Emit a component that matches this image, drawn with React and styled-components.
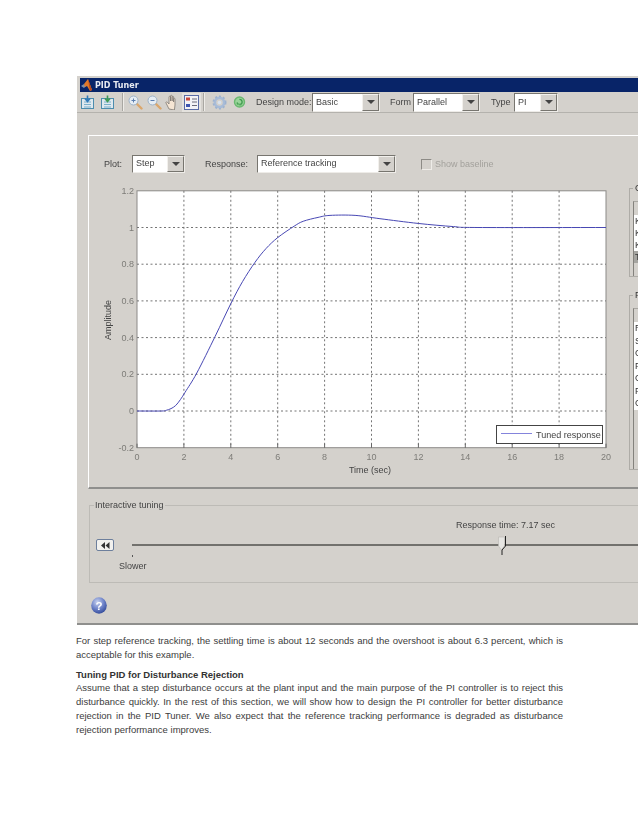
import styled, { createGlobalStyle } from "styled-components";

const GlobalStyle = createGlobalStyle`
  html, body { margin: 0; padding: 0; background: #fff; }
`;

const uiFont = `"Liberation Sans", Arial, sans-serif`;

const Page = styled.div`
  width: 638px;
  height: 826px;
  overflow: hidden;
  padding-top: 76px;
  box-sizing: border-box;
  background: #fff;
`;

const Window = styled.div`
  width: 561px;
  height: 549px;
  margin-left: 77px;
  box-sizing: border-box;
  padding-top: 2px;
  overflow: hidden;
  background: #d4d1cc;
  border-bottom: 2px solid #8f8f8d;
  font-family: ${uiFont};
  font-size: 9px;
  color: #333;
  filter: blur(0.45px);
`;

const TitleBar = styled.div`
  height: 14px;
  margin-left: 3px;
  display: flex;
  align-items: center;
  gap: 2px;
  padding-left: 1px;
  background: #082468;
  color: #e8ebf2;
  font-family: "DejaVu Sans", sans-serif;
  font-weight: bold;
  font-size: 8px;
`;

const Toolbar = styled.div`
  height: 21px;
  display: flex;
  align-items: center;
  box-sizing: border-box;
  border-bottom: 1px solid #b4b2ad;
`;

const IconSlot = styled.div`
  flex: none;
  width: ${(p) => p.$w || 20}px;
  height: 19px;
  display: flex;
  align-items: center;
  justify-content: center;
  background: ${(p) => (p.$on ? "#e4e2de" : "transparent")};
`;

const Separator = styled.div`
  flex: none;
  width: 1px;
  height: 18px;
  margin: 0 ${(p) => p.$after}px 0 ${(p) => p.$before}px;
  background: #a9a7a2;
  border-right: 1px solid #eeece8;
`;

const ToolLabel = styled.span`
  flex: none;
  width: ${(p) => p.$w}px;
  margin-left: ${(p) => p.$ml}px;
  color: #444;
  white-space: nowrap;
`;

const SelectBox = styled.div`
  flex: none;
  width: ${(p) => p.$w}px;
  height: ${(p) => p.$h || 19}px;
  box-sizing: border-box;
  display: flex;
  background: #fff;
  border-top: 1px solid #77756f;
  border-left: 1px solid #77756f;
  border-right: 1px solid #eeece8;
  border-bottom: 1px solid #eeece8;
`;

const SelectValue = styled.span`
  flex: 1;
  padding-left: 3px;
  line-height: ${(p) => (p.$h || 19) - 3}px;
  color: #444;
  white-space: nowrap;
`;

const SelectArrow = styled.span`
  flex: none;
  width: 15px;
  display: flex;
  align-items: center;
  justify-content: center;
  background: #d4d1cc;
  border-top: 1px solid #f2f0ec;
  border-left: 1px solid #f2f0ec;
  border-right: 1px solid #77756f;
  border-bottom: 1px solid #77756f;
  &::after {
    content: "";
    border-left: 4px solid transparent;
    border-right: 4px solid transparent;
    border-top: 4px solid #444;
  }
`;

const Panel = styled.div`
  height: 354px;
  margin: 22px 0 0 11px;
  padding: 19px 0 0 11px;
  box-sizing: border-box;
  border-top: 1px solid #fff;
  border-left: 1px solid #fff;
  border-bottom: 2px solid #8f8f8d;
`;

const ControlRow = styled.div`
  display: flex;
  align-items: center;
  height: 18px;
  margin-left: 4px;
`;

const CheckBox = styled.span`
  flex: none;
  width: 9px;
  height: 9px;
  margin-left: 25px;
  margin-right: 3px;
  border-top: 1px solid #8d8b86;
  border-left: 1px solid #8d8b86;
  border-right: 1px solid #eeece8;
  border-bottom: 1px solid #eeece8;
`;

const MutedLabel = styled.span`
  color: #a3a19c;
`;

const PlotRow = styled.div`
  display: flex;
  align-items: flex-start;
  margin-top: 12px;
`;

const Chart = styled.svg`
  flex: none;
  display: block;
`;

const SideColumn = styled.div`
  flex: none;
  width: 60px;
  margin: 3px 0 0 13px;
  display: flex;
  flex-direction: column;
  gap: 18px;
`;

const SideGroup = styled.div`
  height: ${(p) => p.$h}px;
  box-sizing: border-box;
  padding: ${(p) => p.$top}px 0 0 3px;
  border: 1px solid #aeaca7;
  border-right: 0;
  position: relative;
`;

const SideTitle = styled.span`
  position: absolute;
  top: -6px;
  left: 3px;
  padding: 0 2px;
  background: #d4d1cc;
  line-height: 11px;
`;

const SideTable = styled.div`
  height: 100%;
  padding-top: 13px;
  box-sizing: border-box;
  border-left: 1px solid #84827d;
  border-top: 1px solid #a9a7a2;
`;

const SideCell = styled.div`
  height: ${(p) => p.$rh}px;
  line-height: ${(p) => p.$rh}px;
  padding-left: 1px;
  background: ${(p) => (p.$on ? "#a5a4a0" : "#fff")};
`;

const TuningGroup = styled.fieldset`
  height: 83px;
  margin: 11px 0 0 12px;
  padding: 0;
  box-sizing: border-box;
  border: 1px solid #bdbbb6;
  border-right: 0;
  min-width: 0;
`;

const TuningLegend = styled.legend`
  margin-left: 4px;
  padding: 0 1px;
  line-height: 11px;
  color: #444;
`;

const ResponseTime = styled.div`
  margin: 8px 0 0 366px;
  line-height: 12px;
  color: #444;
`;

const SliderRow = styled.div`
  display: flex;
  align-items: center;
  margin-top: 5px;
  height: 18px;
  padding-left: 6px;
`;

const RewindButton = styled.div`
  flex: none;
  width: 18px;
  height: 12px;
  box-sizing: border-box;
  display: flex;
  align-items: center;
  justify-content: center;
  background: #f2f1ee;
  border: 1px solid #6d7f9c;
  border-radius: 2px;
`;

const Track = styled.div`
  flex: 1;
  height: 2px;
  margin-left: 18px;
  background: #72716d;
  position: relative;
`;

const Thumb = styled.svg`
  position: absolute;
  left: 366px;
  top: -8px;
`;

const SlowerTick = styled.div`
  width: 1px;
  height: 2px;
  margin: 1px 0 0 42px;
  background: #555;
`;

const SlowerLabel = styled.div`
  margin: 3px 0 0 29px;
  line-height: 12px;
  color: #444;
`;

const HelpRow = styled.div`
  margin: 14px 0 0 14px;
`;

const Article = styled.div`
  width: 487px;
  margin: 9px 0 0 76px;
  font-family: "Liberation Sans", Arial, sans-serif;
  font-size: 9.5px;
  line-height: 14px;
  color: #3c3c3c;
`;

const Paragraph = styled.div`
  margin: 0 0 ${(p) => p.$mb || 0}px;
`;

const TextLine = styled.div`
  white-space: nowrap;
  text-align: justify;
  text-align-last: ${(p) => (p.$last ? "left" : "justify")};
`;

const Heading = styled.h3`
  margin: 0;
  font-size: 9.5px;
  line-height: 12px;
  font-weight: bold;
  color: #333;
`;

function Select({ value, w, h }) {
  return (
    <SelectBox $w={w} $h={h}>
      <SelectValue $h={h}>{value}</SelectValue>
      <SelectArrow />
    </SelectBox>
  );
}

function MatlabLogo() {
  return (
    <svg width="12" height="13" viewBox="0 0 12 13">
      <path d="M0 7l3-2 2 2-2 2z" fill="#7f8fa8" />
      <path d="M3 5l4-5 4 11-2 1-3-5-2 1z" fill="#e0792a" />
      <path d="M7 0l4 11-2 1z" fill="#b8481c" />
    </svg>
  );
}

function DocIcon({ arrow }) {
  return (
    <svg width="15" height="15" viewBox="0 0 15 15">
      <rect x="1.5" y="3.5" width="12" height="10" fill="#dfe8ee" stroke="#4d8dae" />
      <path d="M4 7h7M4 9.5h7M4 12h7" stroke="#7ab0cc" />
      <path d="M7.5 0.5v6M5 3.5l2.5 3 2.5-3" fill="none" stroke={arrow} strokeWidth="1.6" />
    </svg>
  );
}

function ZoomIcon({ plus }) {
  return (
    <svg width="16" height="16" viewBox="0 0 16 16">
      <path d="M9.5 9.5l5 5" stroke="#dba76c" strokeWidth="2.4" strokeLinecap="round" />
      <circle cx="6.5" cy="6.5" r="4.5" fill="#e6edf4" stroke="#9db2c8" />
      <path d="M4.5 6.5h4" stroke="#5c7fb0" />
      {plus && <path d="M6.5 4.5v4" stroke="#5c7fb0" />}
    </svg>
  );
}

function HandIcon() {
  return (
    <svg width="15" height="16" viewBox="0 0 15 16">
      <path
        d="M4 15l-3-6c-.5-1 .8-1.6 1.4-.8L4 10V3c0-1 1.4-1 1.5 0v4-5c0-1 1.5-1 1.6 0v5-4c0-1 1.5-1 1.5 0v5-3c0-1 1.4-1 1.4 0v6l-.6 5z"
        fill="#f6e6d4"
        stroke="#7f7a74"
        strokeWidth=".8"
      />
    </svg>
  );
}

function ListIcon() {
  return (
    <svg width="15" height="15" viewBox="0 0 15 15">
      <rect x=".5" y=".5" width="14" height="14" fill="#f3f3f6" stroke="#5a6ca6" />
      <rect x="2" y="2.5" width="4" height="3" fill="#c8483c" />
      <rect x="2" y="9" width="4" height="3" fill="#3c54b0" />
      <path d="M8 4h5M8 7h5M8 10.5h5" stroke="#6b6b7a" />
    </svg>
  );
}

function GearIcon() {
  return (
    <svg width="15" height="15" viewBox="0 0 15 15">
      <circle cx="7.5" cy="7.5" r="4.6" fill="none" stroke="#a8bcd8" strokeWidth="2.6" />
      <circle cx="7.5" cy="7.5" r="6.2" fill="none" stroke="#9db2d0" strokeWidth="1.6" strokeDasharray="2 2" />
      <circle cx="7.5" cy="7.5" r="1.8" fill="#d8e2ee" />
    </svg>
  );
}

function GreenIcon() {
  return (
    <svg width="13" height="14" viewBox="0 0 13 14">
      <circle cx="6.5" cy="7" r="5" fill="#9ad49a" stroke="#6ab870" strokeWidth="1.4" />
      <path d="M4 7.5a2.6 2.6 0 1 0 2.4-3.2" fill="none" stroke="#3e9a4e" strokeWidth="1.3" />
      <path d="M3.8 9l4.5 1.5" stroke="#6ab870" />
    </svg>
  );
}

function HelpIcon() {
  return (
    <svg width="16" height="17" viewBox="0 0 16 17" style={{ display: "block" }}>
      <defs>
        <radialGradient id="help" cx="40%" cy="30%" r="75%">
          <stop offset="0%" stopColor="#c9d3f0" />
          <stop offset="55%" stopColor="#6d82c8" />
          <stop offset="100%" stopColor="#2f4796" />
        </radialGradient>
      </defs>
      <ellipse cx="8" cy="8.5" rx="7.8" ry="8.2" fill="url(#help)" />
      <text x="8" y="12.5" textAnchor="middle" fill="#fff" fontSize="11.5" fontWeight="bold" fontFamily="Liberation Sans">
        ?
      </text>
    </svg>
  );
}

// plot area in chart coordinates
const px = (t) => 37 + t * 23.45;
const py = (v) => 226 - v * 183.5;

const curve = [
  [0, 0], [1.05, 0], [1.25, 0.004], [1.45, 0.013], [1.65, 0.03], [1.85, 0.062], [2.05, 0.102],
  [2.55, 0.207], [3.33, 0.406], [4, 0.585], [4.5, 0.705], [5.03, 0.81], [5.5, 0.885], [6, 0.945],
  [6.7, 1.007], [7.09, 1.034], [7.72, 1.055], [8.23, 1.066], [9.3, 1.066], [10.36, 1.048], [12, 1.022],
  [13.5, 1.005], [14.5, 1], [20, 1],
];

// catmull-rom through the points so the response doesn't look faceted
function smoothPath(points) {
  const p = points.map(([t, v]) => [px(t), py(v)]);
  let d = `M${p[0][0]} ${p[0][1]}`;
  for (let i = 0; i < p.length - 1; i++) {
    const a = p[i - 1] || p[i];
    const b = p[i];
    const c = p[i + 1];
    const e = p[i + 2] || c;
    const c1 = [b[0] + (c[0] - a[0]) / 6, b[1] + (c[1] - a[1]) / 6];
    const c2 = [c[0] - (e[0] - b[0]) / 6, c[1] - (e[1] - b[1]) / 6];
    d += `C${c1[0]} ${c1[1]} ${c2[0]} ${c2[1]} ${c[0]} ${c[1]}`;
  }
  return d;
}

const xTicks = [0, 2, 4, 6, 8, 10, 12, 14, 16, 18, 20];
const yTicks = [-0.2, 0, 0.2, 0.4, 0.6, 0.8, 1, 1.2];

function StepChart() {
  const left = px(0);
  const right = px(20);
  const top = py(1.2);
  const bottom = py(-0.2);
  return (
    <Chart width="516" height="295" viewBox="0 0 516 295" fontFamily="Liberation Sans, Arial, sans-serif" fontSize="9">
      <rect x={left} y={top} width={right - left} height={bottom - top} fill="#fff" stroke="#8b8a87" />
      {xTicks.slice(1, -1).map((t) => (
        <line key={t} x1={px(t)} x2={px(t)} y1={top} y2={bottom} stroke="#747474" strokeDasharray="2 2.5" />
      ))}
      {yTicks.slice(1, -1).map((v) => (
        <line key={v} x1={left} x2={right} y1={py(v)} y2={py(v)} stroke="#747474" strokeDasharray="2 2.5" />
      ))}
      {xTicks.map((t) => (
        <g key={t}>
          <line x1={px(t)} x2={px(t)} y1={bottom} y2={bottom - 4} stroke="#666" />
          <text x={px(t)} y={bottom + 12} textAnchor="middle" fill="#7d7c78">{t}</text>
        </g>
      ))}
      {yTicks.map((v) => (
        <text key={v} x={left - 3} y={py(v) + 3} textAnchor="end" fill="#7d7c78">{v}</text>
      ))}
      <path d={smoothPath(curve)} fill="none" stroke="#4848b4" strokeWidth="1" />
      <text x="270" y="288" textAnchor="middle" fill="#444">Time (sec)</text>
      <text transform="translate(11 135) rotate(-90)" textAnchor="middle" fill="#444">Amplitude</text>
      <rect x="396.5" y="240.5" width="106" height="18" fill="#fff" stroke="#444" />
      <line x1="401" x2="432" y1="248.5" y2="248.5" stroke="#8484dc" />
      <text x="436" y="252.5" fill="#444">Tuned response</text>
    </Chart>
  );
}

const controllerRows = ["K", "K", "K", "T"];
const performanceRows = ["R", "S", "C", "F", "C", "F", "C"];

export default function App() {
  return (
    <Page>
      <GlobalStyle />
      <Window>
        <TitleBar>
          <MatlabLogo />
          PID Tuner
        </TitleBar>
        <Toolbar>
          <IconSlot><DocIcon arrow="#2f79b8" /></IconSlot>
          <IconSlot><DocIcon arrow="#3f9a56" /></IconSlot>
          <Separator $before={5} $after={1} />
          <IconSlot $w={19}><ZoomIcon plus /></IconSlot>
          <IconSlot $w={19}><ZoomIcon /></IconSlot>
          <IconSlot $w={19}><HandIcon /></IconSlot>
          <IconSlot $w={19} $on><ListIcon /></IconSlot>
          <Separator $before={2} $after={4} />
          <IconSlot><GearIcon /></IconSlot>
          <IconSlot><GreenIcon /></IconSlot>
          <ToolLabel $ml={7} $w={56}>Design mode:</ToolLabel>
          <Select value="Basic" w={68} />
          <ToolLabel $ml={10} $w={23}>Form</ToolLabel>
          <Select value="Parallel" w={67} />
          <ToolLabel $ml={11} $w={23}>Type</ToolLabel>
          <Select value="PI" w={44} />
        </Toolbar>
        <Panel>
          <ControlRow>
            <ToolLabel $ml={0} $w={28}>Plot:</ToolLabel>
            <Select value="Step" w={53} h={18} />
            <ToolLabel $ml={20} $w={52}>Response:</ToolLabel>
            <Select value="Reference tracking" w={139} h={18} />
            <CheckBox />
            <MutedLabel>Show baseline</MutedLabel>
          </ControlRow>
          <PlotRow>
            <StepChart />
            <SideColumn>
              <SideGroup $h={89} $top={12}>
                <SideTitle>C</SideTitle>
                <SideTable>
                  {controllerRows.map((r, i) => (
                    <SideCell key={i} $rh={12} $on={i === 3}>{r}</SideCell>
                  ))}
                </SideTable>
              </SideGroup>
              <SideGroup $h={175} $top={12}>
                <SideTitle>P</SideTitle>
                <SideTable>
                  {performanceRows.map((r, i) => (
                    <SideCell key={i} $rh={12.5}>{r}</SideCell>
                  ))}
                </SideTable>
              </SideGroup>
            </SideColumn>
          </PlotRow>
        </Panel>
        <TuningGroup>
          <TuningLegend>Interactive tuning</TuningLegend>
          <ResponseTime>Response time: 7.17 sec</ResponseTime>
          <SliderRow>
            <RewindButton>
              <svg width="10" height="7" viewBox="0 0 10 7">
                <path d="M5 0v7L1 3.5zM9.5 0v7L5.5 3.5z" fill="#333" />
              </svg>
            </RewindButton>
            <Track>
              <Thumb width="10" height="19" viewBox="0 0 10 19">
                <path d="M0.5 1h6v9l-3 4-3-4z" fill="#e6e5e2" stroke="#b9b7b2" strokeWidth=".6" />
                <path d="M7.5 0v10L4 14v5" fill="none" stroke="#222" />
              </Thumb>
            </Track>
          </SliderRow>
          <SlowerTick />
          <SlowerLabel>Slower</SlowerLabel>
        </TuningGroup>
        <HelpRow><HelpIcon /></HelpRow>
      </Window>
      <Article>
        <Paragraph $mb={7}>
          <TextLine>
            For step reference tracking, the settling time is about 12 seconds and the overshoot is about 6.3 percent, which is
          </TextLine>
          <TextLine $last>acceptable for this example.</TextLine>
        </Paragraph>
        <Heading>Tuning PID for Disturbance Rejection</Heading>
        <Paragraph>
          <TextLine>
            Assume that a step disturbance occurs at the plant input and the main purpose of the PI controller is to reject this
          </TextLine>
          <TextLine>
            disturbance quickly. In the rest of this section, we will show how to design the PI controller for better disturbance
          </TextLine>
          <TextLine>
            rejection in the PID Tuner. We also expect that the reference tracking performance is degraded as disturbance
          </TextLine>
          <TextLine $last>rejection performance improves.</TextLine>
        </Paragraph>
      </Article>
    </Page>
  );
}
